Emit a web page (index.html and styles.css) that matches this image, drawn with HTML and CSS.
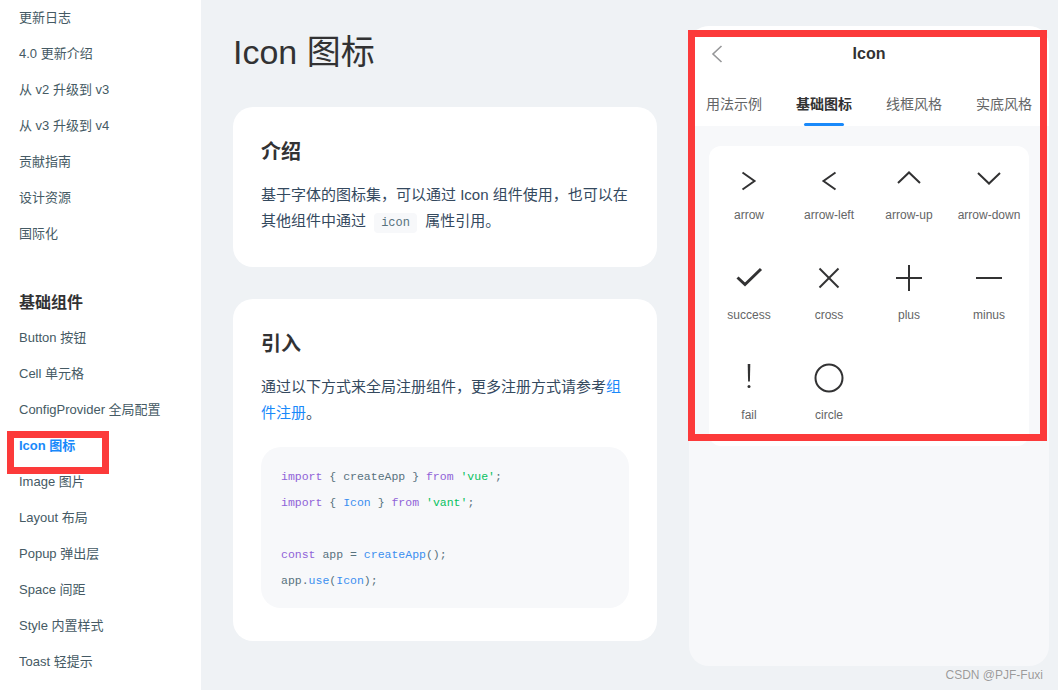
FILE: index.html
```html
<!DOCTYPE html>
<html lang="zh-CN">
<head>
<meta charset="utf-8">
<title>Icon 图标</title>
<link rel="stylesheet" href="styles.css">
</head>
<body>
<aside class="sidebar">
  <nav class="nav-group">
    <a class="nav-item">更新日志</a>
    <a class="nav-item">4.0 更新介绍</a>
    <a class="nav-item">从 v2 升级到 v3</a>
    <a class="nav-item">从 v3 升级到 v4</a>
    <a class="nav-item">贡献指南</a>
    <a class="nav-item">设计资源</a>
    <a class="nav-item">国际化</a>
  </nav>
  <nav class="nav-group group-gap">
    <div class="nav-title">基础组件</div>
    <a class="nav-item">Button 按钮</a>
    <a class="nav-item">Cell 单元格</a>
    <a class="nav-item">ConfigProvider 全局配置</a>
    <a class="nav-item active">Icon 图标</a>
    <a class="nav-item">Image 图片</a>
    <a class="nav-item">Layout 布局</a>
    <a class="nav-item">Popup 弹出层</a>
    <a class="nav-item">Space 间距</a>
    <a class="nav-item">Style 内置样式</a>
    <a class="nav-item">Toast 轻提示</a>
  </nav>
</aside>

<main class="content">
  <h1 class="page-title">Icon 图标</h1>
  <section class="card">
    <h3 class="card-title">介绍</h3>
    <p class="card-text">基于字体的图标集，可以通过 Icon 组件使用，也可以在其他组件中通过 <code class="inline-code">icon</code> 属性引用。</p>
  </section>
  <section class="card">
    <h3 class="card-title">引入</h3>
    <p class="card-text">通过以下方式来全局注册组件，更多注册方式请参考<a class="link">组件注册</a>。</p>
    <pre class="code-block"><code><span class="kw">import</span> { createApp } <span class="kw">from</span> <span class="str">'vue'</span>;
<span class="kw">import</span> { <span class="fn">Icon</span> } <span class="kw">from</span> <span class="str">'vant'</span>;

<span class="kw">const</span> app = <span class="fn">createApp</span>();
app.<span class="fn">use</span>(<span class="fn">Icon</span>);</code></pre>
  </section>
</main>

<div class="simulator-wrap">
  <div class="simulator">
    <header class="demo-nav">
      <svg class="back" width="12" height="18" viewBox="0 0 12 18"><polyline points="10.5,1 2,9 10.5,17" fill="none" stroke="#969799" stroke-width="1.6"/></svg>
      <span class="demo-title">Icon</span>
    </header>
    <div class="tabs">
      <div class="tab">用法示例</div>
      <div class="tab tab-active">基础图标</div>
      <div class="tab">线框风格</div>
      <div class="tab">实底风格</div>
    </div>
    <div class="icon-card">
      <div class="icon-cell">
        <svg class="ico" viewBox="0 0 28 28"><polyline points="7.5,8.5 19.5,17 7.5,25.5"/></svg>
        <span class="icon-name">arrow</span>
      </div>
      <div class="icon-cell">
        <svg class="ico" viewBox="0 0 28 28"><polyline points="20.5,8.5 8.5,17 20.5,25.5"/></svg>
        <span class="icon-name">arrow-left</span>
      </div>
      <div class="icon-cell">
        <svg class="ico" viewBox="0 0 28 28"><polyline points="3,19 14,8.5 25,19"/></svg>
        <span class="icon-name">arrow-up</span>
      </div>
      <div class="icon-cell">
        <svg class="ico" viewBox="0 0 28 28"><polyline points="3,9 14,19.5 25,9"/></svg>
        <span class="icon-name">arrow-down</span>
      </div>
      <div class="icon-cell">
        <svg class="ico" viewBox="0 0 28 28"><polyline class="thick" points="2.5,13.5 10,20.5 26,5"/></svg>
        <span class="icon-name">success</span>
      </div>
      <div class="icon-cell">
        <svg class="ico" viewBox="0 0 28 28"><line x1="4.5" y1="4.5" x2="23.5" y2="23.5"/><line x1="23.5" y1="4.5" x2="4.5" y2="23.5"/></svg>
        <span class="icon-name">cross</span>
      </div>
      <div class="icon-cell">
        <svg class="ico" viewBox="0 0 28 28"><line x1="1" y1="14" x2="27" y2="14"/><line x1="14" y1="1" x2="14" y2="27"/></svg>
        <span class="icon-name">plus</span>
      </div>
      <div class="icon-cell">
        <svg class="ico" viewBox="0 0 28 28"><line x1="1" y1="14" x2="27" y2="14"/></svg>
        <span class="icon-name">minus</span>
      </div>
      <div class="icon-cell">
        <svg class="ico" viewBox="0 0 28 28"><path class="fill" d="M12.7 0h2.6l-0.4 17.5h-1.8z"/><circle class="fill" cx="14" cy="22.5" r="1.5"/></svg>
        <span class="icon-name">fail</span>
      </div>
      <div class="icon-cell">
        <svg class="ico" viewBox="0 0 28 28"><circle cx="14" cy="14" r="13.5"/></svg>
        <span class="icon-name">circle</span>
      </div>
    </div>
  </div>
  <div class="highlight-box"></div>
</div>

<div class="watermark">CSDN @PJF-Fuxi</div>
</body>
</html>
```

FILE: styles.css
```css
*, *::before, *::after { box-sizing: border-box; }

html, body {
  margin: 0;
  padding: 0;
  height: 690px;
  overflow: hidden;
}

body {
  display: flex;
  align-items: flex-start;
  background: #eff2f5;
  font-family: "Liberation Sans", Arial, "Noto Sans CJK SC", sans-serif;
  color: #323233;
  position: relative;
}

/* ---------- sidebar ---------- */
.sidebar {
  width: 201px;
  flex: none;
  height: 690px;
  background: #fff;
}

.nav-group {
  display: flex;
  flex-direction: column;
}

.group-gap { margin-top: 33px; }

.nav-title {
  height: 35px;
  line-height: 35px;
  padding-left: 19px;
  font-size: 16px;
  font-weight: 700;
  color: #323233;
}

.nav-item {
  height: 36px;
  line-height: 36px;
  padding-left: 19px;
  font-size: 13px;
  color: #455a64;
  white-space: nowrap;
}

.nav-item.active {
  color: #1989fa;
  font-weight: 700;
  position: relative;
}

.nav-item.active::after {
  content: "";
  position: absolute;
  left: 7px;
  top: 3px;
  width: 102px;
  height: 43px;
  border: 7px solid #fc3a3a;
}

/* ---------- main content ---------- */
.content {
  width: 424px;
  flex: none;
  margin-left: 32px;
  padding-top: 32px;
  display: flex;
  flex-direction: column;
  gap: 32px;
}

.page-title {
  margin: 0 0 3px;
  height: 40px;
  line-height: 40px;
  font-size: 34px;
  font-weight: 400;
  color: #323233;
}

.card {
  background: #fff;
  border-radius: 20px;
  padding: 31px 28px 33px;
}

.card-title {
  margin: 0 0 16px;
  height: 28px;
  line-height: 28px;
  font-size: 20px;
  font-weight: 700;
  color: #323233;
}

.card-text {
  margin: 0;
  font-size: 15px;
  line-height: 26px;
  color: #34495e;
}

.inline-code {
  display: inline-block;
  margin: 0 4px;
  padding: 0 7px;
  line-height: 20px;
  background: #f7f8fa;
  border-radius: 4px;
  font-family: "Liberation Mono", "DejaVu Sans Mono", monospace;
  font-size: 12px;
  color: #58727e;
}

.link { color: #1989fa; }

.code-block {
  margin: 21px 0 0;
  padding: 17px 20px 14px;
  background: #f7f8fa;
  border-radius: 20px;
  font-family: "Liberation Mono", "DejaVu Sans Mono", monospace;
  font-size: 11.5px;
  line-height: 26px;
  color: #58727e;
  white-space: pre;
}

.code-block code { font-family: inherit; }
.kw { color: #9063d8; }
.str { color: #07c160; }
.fn { color: #3b8ff0; }

/* ---------- simulator ---------- */
.simulator-wrap {
  position: relative;
  width: 360px;
  flex: none;
  margin: 26px 0 0 32px;
}

.simulator {
  height: 640px;
  background: #f7f8fa;
  border-radius: 20px;
  overflow: hidden;
}

.demo-nav {
  height: 54px;
  background: #fff;
  display: flex;
  align-items: center;
  justify-content: center;
  position: relative;
  padding-top: 1px;
}

.back {
  position: absolute;
  left: 22px;
  top: 19px;
}

.demo-title {
  font-size: 16px;
  font-weight: 700;
  color: #323233;
}

.tabs {
  height: 46px;
  background: #fff;
  display: flex;
}

.tab {
  width: 90px;
  flex: none;
  display: flex;
  align-items: center;
  justify-content: center;
  font-size: 14px;
  color: #646566;
  position: relative;
}

.tab-active {
  color: #323233;
  font-weight: 700;
}

.tab-active::after {
  content: "";
  position: absolute;
  bottom: 0;
  left: 25px;
  width: 40px;
  height: 3px;
  border-radius: 3px;
  background: #1989fa;
}

.icon-card {
  margin: 20px 20px 0;
  height: 300px;
  background: #fff;
  border-radius: 12px;
  display: grid;
  grid-template-columns: repeat(4, 80px);
  grid-auto-rows: 100px;
}

.icon-cell {
  display: flex;
  flex-direction: column;
  align-items: center;
  padding-top: 18px;
}

.ico {
  width: 28px;
  height: 28px;
  overflow: visible;
  fill: none;
  stroke: #323233;
  stroke-width: 2;
}

.ico .thick { stroke-width: 3; }
.ico .fill { fill: #323233; stroke: none; }

.icon-name {
  margin-top: 15px;
  font-size: 12px;
  line-height: 16px;
  color: #646566;
  white-space: nowrap;
}

.highlight-box {
  position: absolute;
  left: -1px;
  top: 4px;
  width: 359px;
  height: 411px;
  border: 7px solid #fc3a3a;
}

.watermark {
  position: absolute;
  right: 15px;
  top: 667px;
  font-size: 12px;
  line-height: 16px;
  color: #9a9a9a;
  text-shadow: 0 0 1px #fff;
}
```
